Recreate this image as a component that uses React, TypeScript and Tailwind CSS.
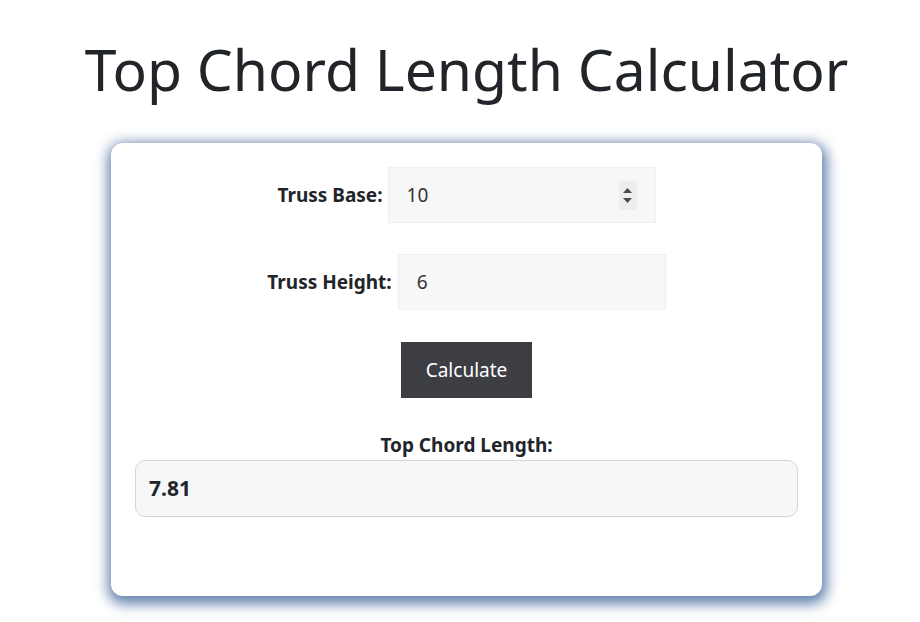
import React, { useState } from 'react'

const Spinner: React.FC = () => {
  return (
    <div className="flex h-[29px] w-[19px] flex-col items-center justify-center gap-[5px] bg-[#eceef0]">
      <svg width="9" height="5" viewBox="0 0 9 5">
        <path d="M4.5 0 L9 5 L0 5 Z" fill="#4a4a4a" />
      </svg>
      <svg width="9" height="5" viewBox="0 0 9 5">
        <path d="M0 0 L9 0 L4.5 5 Z" fill="#4a4a4a" />
      </svg>
    </div>
  )
}

const App: React.FC = () => {
  const [base, setBase] = useState('10')
  const [height, setHeight] = useState('6')
  const [result, setResult] = useState('7.81')

  const handleCalculate = () => {
    const b = parseFloat(base)
    const h = parseFloat(height)
    if (isNaN(b) || isNaN(h)) return
    setResult(Math.sqrt((b / 2) * (b / 2) + h * h).toFixed(2))
  }

  return (
    <div className="min-h-screen bg-white pl-[13px] font-['Noto_Sans',sans-serif] text-[#212529]">
      <h1 className="pt-[32px] text-center text-[57px] font-normal leading-[74px] text-[#212529]">
        Top Chord Length Calculator
      </h1>

      <div className="mx-auto mt-[37px] w-[711px] rounded-xl bg-white px-6 pt-6 pb-[79px] shadow-[1px_4px_13px_4px_rgba(72,108,158,0.85)]">
        <div className="flex items-center justify-center gap-[5px]">
          <label className="text-[19px] font-bold">Truss Base:</label>
          <div className="flex h-[56px] w-[268px] items-center border border-[#eef0f2] bg-[#f6f7f9] pl-[18px] pr-[18px]">
            <input
              value={base}
              onChange={(e) => setBase(e.target.value)}
              className="w-full bg-transparent text-[19px] text-[#333] outline-none"
            />
            <Spinner />
          </div>
        </div>

        <div className="mt-[31px] flex items-center justify-center gap-[6px]">
          <label className="text-[19px] font-bold">Truss Height:</label>
          <div className="flex h-[56px] w-[268px] items-center border border-[#eef0f2] bg-[#f6f7f9] pl-[18px]">
            <input
              value={height}
              onChange={(e) => setHeight(e.target.value)}
              className="w-full bg-transparent text-[19px] text-[#333] outline-none"
            />
          </div>
        </div>

        <div className="mt-[32px] flex justify-center">
          <button
            onClick={handleCalculate}
            className="h-[56px] w-[131px] bg-[#3d3d44] text-[19px] text-white"
          >
            Calculate
          </button>
        </div>

        <div className="mt-[34px] text-center text-[19px] font-bold leading-[27px]">Top Chord Length:</div>
        <div className="mt-px flex h-[57px] items-center rounded-[10px] border border-[#d3d5d8] bg-[#f6f7f9] px-[13px] text-[21px] font-bold">
          {result}
        </div>
      </div>
    </div>
  )
}

export default App
